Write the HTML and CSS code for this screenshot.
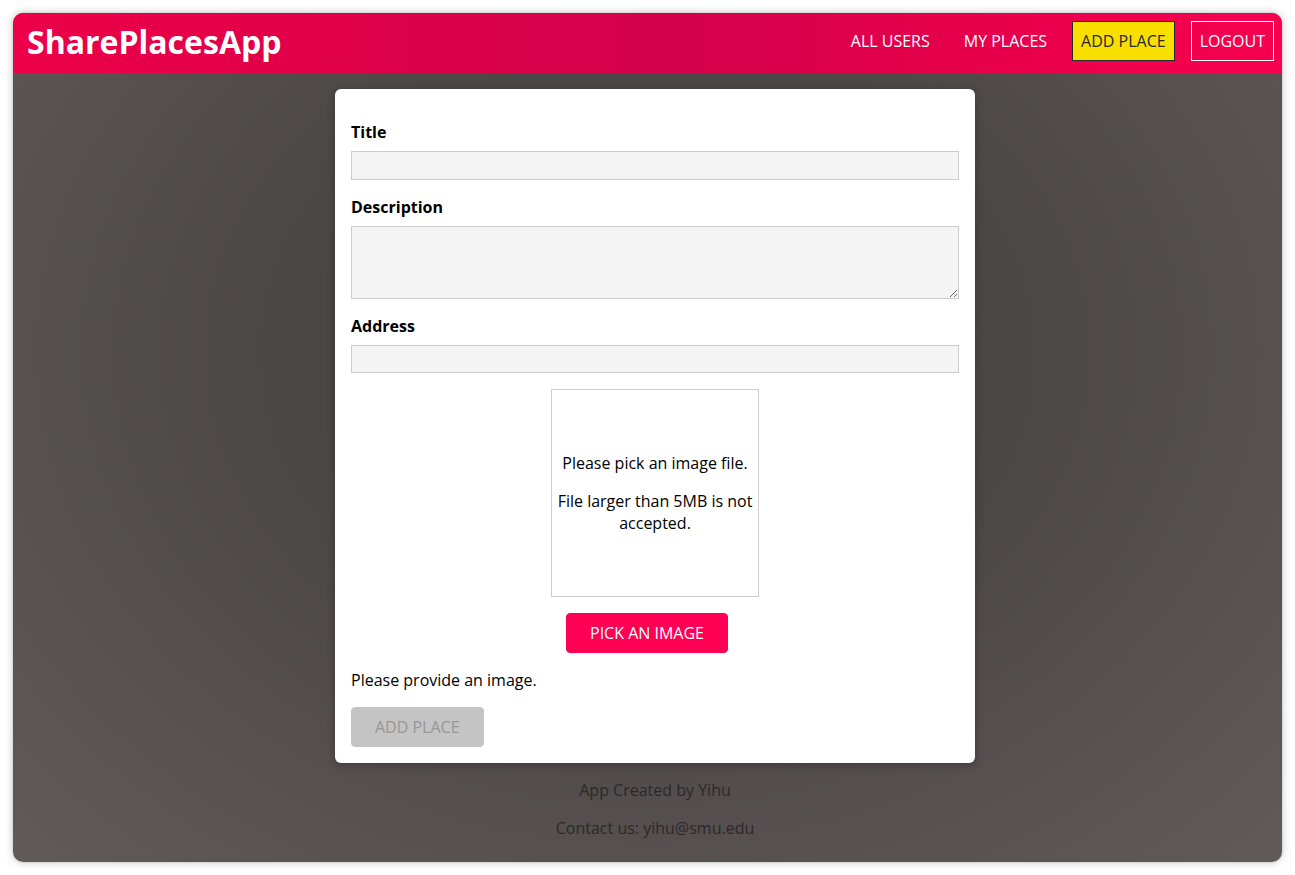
FILE: index.html
```html
<!DOCTYPE html>
<html lang="en">
<head>
<meta charset="utf-8">
<title>SharePlacesApp</title>
<link rel="stylesheet" href="styles.css">
</head>
<body>
<div class="window">
  <header class="main-header">
    <h1 class="logo">SharePlacesApp</h1>
    <nav>
      <ul class="nav-links">
        <li><a href="#">ALL USERS</a></li>
        <li><a href="#">MY PLACES</a></li>
        <li><a href="#" class="active">ADD PLACE</a></li>
        <li><button class="logout">LOGOUT</button></li>
      </ul>
    </nav>
  </header>
  <main class="main">
    <form class="place-form">
      <div class="form-control">
        <label for="title">Title</label>
        <input id="title" type="text">
      </div>
      <div class="form-control">
        <label for="description">Description</label>
        <textarea id="description" rows="3"></textarea>
      </div>
      <div class="form-control">
        <label for="address">Address</label>
        <input id="address" type="text">
      </div>
      <div class="form-control">
        <div class="image-upload">
          <div class="image-upload__preview">
            <div>
              <p>Please pick an image file.</p>
              <p>File larger than 5MB is not accepted.</p>
            </div>
          </div>
          <button type="button" class="button">PICK AN IMAGE</button>
        </div>
        <p class="hint">Please provide an image.</p>
      </div>
      <button type="submit" class="button" disabled>ADD PLACE</button>
    </form>
    <footer class="footer">
      <p>App Created by Yihu</p>
      <p>Contact us: yihu@smu.edu</p>
    </footer>
  </main>
</div>
</body>
</html>
```

FILE: styles.css
```css
* {
  box-sizing: border-box;
}

html, body {
  margin: 0;
  padding: 0;
  background: #ffffff;
  font-family: "Open Sans", "DejaVu Sans", sans-serif;
  font-size: 16px;
}

.window {
  margin: 13px;
  width: 1269px;
  height: 849px;
  border-radius: 10px;
  overflow: hidden;
  box-shadow: 0 0 10px rgba(0, 0, 0, 0.22), 0 0 2px rgba(0, 0, 0, 0.2);
  background: radial-gradient(ellipse farthest-corner at 50% 40%, #454040 0%, #4d4848 45%, #615a5a 100%);
  display: flex;
  flex-direction: column;
}

.main-header {
  height: 60px;
  flex: none;
  display: flex;
  align-items: center;
  justify-content: space-between;
  padding: 0 0 4px 14px;
  background: linear-gradient(90deg, #ec0049 0%, #dd004a 30%, #d4004b 52%, #e6004c 75%, #f60050 100%);
}

.logo {
  margin: 0;
  font-size: 32px;
  font-weight: 700;
  color: #ffffff;
}

.nav-links {
  list-style: none;
  margin: 0;
  padding: 0;
  display: flex;
  align-items: center;
}

.nav-links li {
  margin: 0 8px;
}

.nav-links a {
  display: inline-block;
  border: 1px solid transparent;
  color: #ffffff;
  text-decoration: none;
  padding: 8px;
  font-size: 16px;
}

.nav-links a.active {
  background: #f8df00;
  border-color: #292929;
  color: #292929;
}

.logout {
  border: 1px solid #ffffff;
  color: #ffffff;
  background: transparent;
  padding: 8px;
  font: inherit;
  cursor: pointer;
}

.main {
  flex: 1;
  padding: 16px 0 0 15px;
}

.place-form {
  width: 640px;
  margin: 0 auto;
  padding: 16px;
  background: #ffffff;
  border-radius: 6px;
  box-shadow: 0 2px 8px rgba(0, 0, 0, 0.26);
}

.form-control {
  margin: 16px 0;
}

.form-control label {
  display: block;
  font-weight: 700;
  margin-bottom: 8px;
  color: #000000;
}

.form-control input,
.form-control textarea {
  display: block;
  width: 100%;
  font: inherit;
  border: 1px solid #cccccc;
  background: #f4f4f4;
  padding: 2.4px 4px;
  margin: 0;
}

.image-upload {
  display: flex;
  flex-direction: column;
  align-items: center;
  justify-content: center;
}

.image-upload__preview {
  width: 208px;
  height: 208px;
  border: 1px solid #cccccc;
  display: flex;
  justify-content: center;
  align-items: center;
  text-align: center;
  margin-bottom: 16px;
  color: #000000;
}

.image-upload__preview p {
  margin: 16px 0;
}

.image-upload__preview p:first-child {
  margin-top: 0;
}

.image-upload__preview p:last-child {
  margin-bottom: 0;
}

.button {
  font: inherit;
  padding: 8px 23px;
  border: 1px solid #ff0055;
  border-radius: 4px;
  background: #ff0055;
  color: #ffffff;
  cursor: pointer;
  margin-right: 16px;
  display: inline-block;
}

.button:disabled {
  background: #c4c4c4;
  border-color: #c4c4c4;
  color: #979797;
  cursor: not-allowed;
}

.hint {
  margin: 16px 0;
  color: #000000;
}

.footer {
  text-align: center;
  color: #2c2828;
}

.footer p {
  margin: 16px 0;
}
```
